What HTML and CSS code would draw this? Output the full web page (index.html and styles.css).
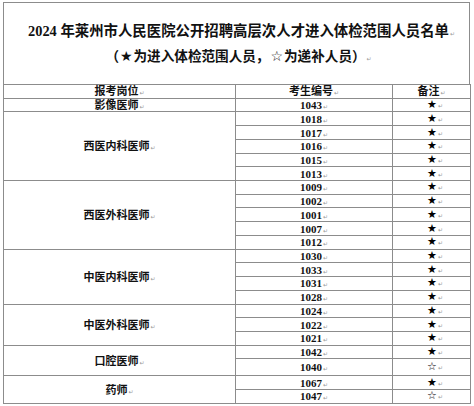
FILE: index.html
```html
<!DOCTYPE html>
<html lang="zh-CN">
<head>
<meta charset="utf-8">
<title>2024年莱州市人民医院公开招聘高层次人才进入体检范围人员名单</title>
<link rel="stylesheet" href="styles.css">
</head>
<body>
<div class="sheet">
  <div class="title">
    <div class="t1">2024 年莱州市人民医院公开招聘高层次人才进入体检范围人员名单<span class="m">↵</span></div>
    <div class="t2">（<span class="st">★</span>为进入体检范围人员，<span class="st">☆</span>为递补人员）<span class="m">↵</span></div>
  </div>
  <table class="list">
    <colgroup><col class="c1"><col class="c2"><col class="c3"></colgroup>
    <tr class="r"><th>报考岗位<span class="m">↵</span></th><th>考生编号<span class="m">↵</span></th><th>备注<span class="m">↵</span></th></tr>
    <tr class="r"><td class="pos">影像医师<span class="m">↵</span></td><td>1043<span class="m">↵</span></td><td class="s">★<span class="m">↵</span></td></tr>
    <tr class="r"><td class="pos" rowspan="5">西医内科医师<span class="m">↵</span></td><td>1018<span class="m">↵</span></td><td class="s">★<span class="m">↵</span></td></tr>
    <tr class="r"><td>1017<span class="m">↵</span></td><td class="s">★<span class="m">↵</span></td></tr>
    <tr class="r"><td>1016<span class="m">↵</span></td><td class="s">★<span class="m">↵</span></td></tr>
    <tr class="r"><td>1015<span class="m">↵</span></td><td class="s">★<span class="m">↵</span></td></tr>
    <tr class="r"><td>1013<span class="m">↵</span></td><td class="s">★<span class="m">↵</span></td></tr>
    <tr class="r"><td class="pos" rowspan="5">西医外科医师<span class="m">↵</span></td><td>1009<span class="m">↵</span></td><td class="s">★<span class="m">↵</span></td></tr>
    <tr class="r"><td>1002<span class="m">↵</span></td><td class="s">★<span class="m">↵</span></td></tr>
    <tr class="r"><td>1001<span class="m">↵</span></td><td class="s">★<span class="m">↵</span></td></tr>
    <tr class="r"><td>1007<span class="m">↵</span></td><td class="s">★<span class="m">↵</span></td></tr>
    <tr class="r"><td>1012<span class="m">↵</span></td><td class="s">★<span class="m">↵</span></td></tr>
    <tr class="r"><td class="pos" rowspan="4">中医内科医师<span class="m">↵</span></td><td>1030<span class="m">↵</span></td><td class="s">★<span class="m">↵</span></td></tr>
    <tr class="r"><td>1033<span class="m">↵</span></td><td class="s">★<span class="m">↵</span></td></tr>
    <tr class="r"><td>1031<span class="m">↵</span></td><td class="s">★<span class="m">↵</span></td></tr>
    <tr class="r"><td>1028<span class="m">↵</span></td><td class="s">★<span class="m">↵</span></td></tr>
    <tr class="r"><td class="pos" rowspan="3">中医外科医师<span class="m">↵</span></td><td>1024<span class="m">↵</span></td><td class="s">★<span class="m">↵</span></td></tr>
    <tr class="r"><td>1022<span class="m">↵</span></td><td class="s">★<span class="m">↵</span></td></tr>
    <tr class="r"><td>1021<span class="m">↵</span></td><td class="s">★<span class="m">↵</span></td></tr>
    <tr class="r"><td class="pos" rowspan="2">口腔医师<span class="m">↵</span></td><td>1042<span class="m">↵</span></td><td class="s">★<span class="m">↵</span></td></tr>
    <tr class="r tall"><td>1040<span class="m">↵</span></td><td class="s">☆<span class="m">↵</span></td></tr>
    <tr class="r"><td class="pos" rowspan="2">药师<span class="m">↵</span></td><td>1067<span class="m">↵</span></td><td class="s">★<span class="m">↵</span></td></tr>
    <tr class="r"><td>1047<span class="m">↵</span></td><td class="s">☆<span class="m">↵</span></td></tr>
  </table>
</div>
</body>
</html>
```

FILE: styles.css
```css
html, body {
  margin: 0;
  padding: 0;
  background: #ffffff;
}

body {
  font-family: "Liberation Serif", "Noto Sans CJK SC", serif;
  color: #111111;
}

.sheet {
  width: 467px;
  margin: 2px 0 0 3px;
}

.title {
  box-sizing: border-box;
  width: 467px;
  height: 82px;
  border: 1px solid #8c8c8c;
  border-bottom: none;
  display: flex;
  flex-direction: column;
  justify-content: center;
  align-items: center;
  font-weight: 700;
  padding-top: 1px;
}

.t1 {
  font-size: 14.4px;
  line-height: 25px;
  white-space: nowrap;
  padding-left: 10px;
}

.t2 {
  font-size: 13.6px;
  line-height: 25px;
  white-space: nowrap;
  padding-left: 4px;
}

.t2 .st {
  font-family: "DejaVu Sans", sans-serif;
  font-size: 14px;
  padding: 0 1px;
}

.m {
  font-family: "DejaVu Sans", sans-serif;
  font-weight: 400;
  font-size: 6px;
  line-height: 0;
  color: #9a9a9a;
  margin-left: 1px;
}

.list {
  width: 467px;
  border-collapse: collapse;
  table-layout: fixed;
}

.c1 { width: 232px; }
.c2 { width: 157px; }
.c3 { width: 78px; }

.list th,
.list td {
  border: 1px solid #8c8c8c;
  padding: 0;
  text-align: center;
  vertical-align: middle;
  font-size: 11px;
  font-weight: 700;
  line-height: 10px;
  white-space: nowrap;
}

.list .r {
  height: 13.73px;
}

.list .tall {
  height: 17px;
}

.list td.s {
  font-family: "DejaVu Sans", sans-serif;
  font-size: 11px;
  font-weight: 400;
  color: #000000;
  padding-left: 7px;
}
```
